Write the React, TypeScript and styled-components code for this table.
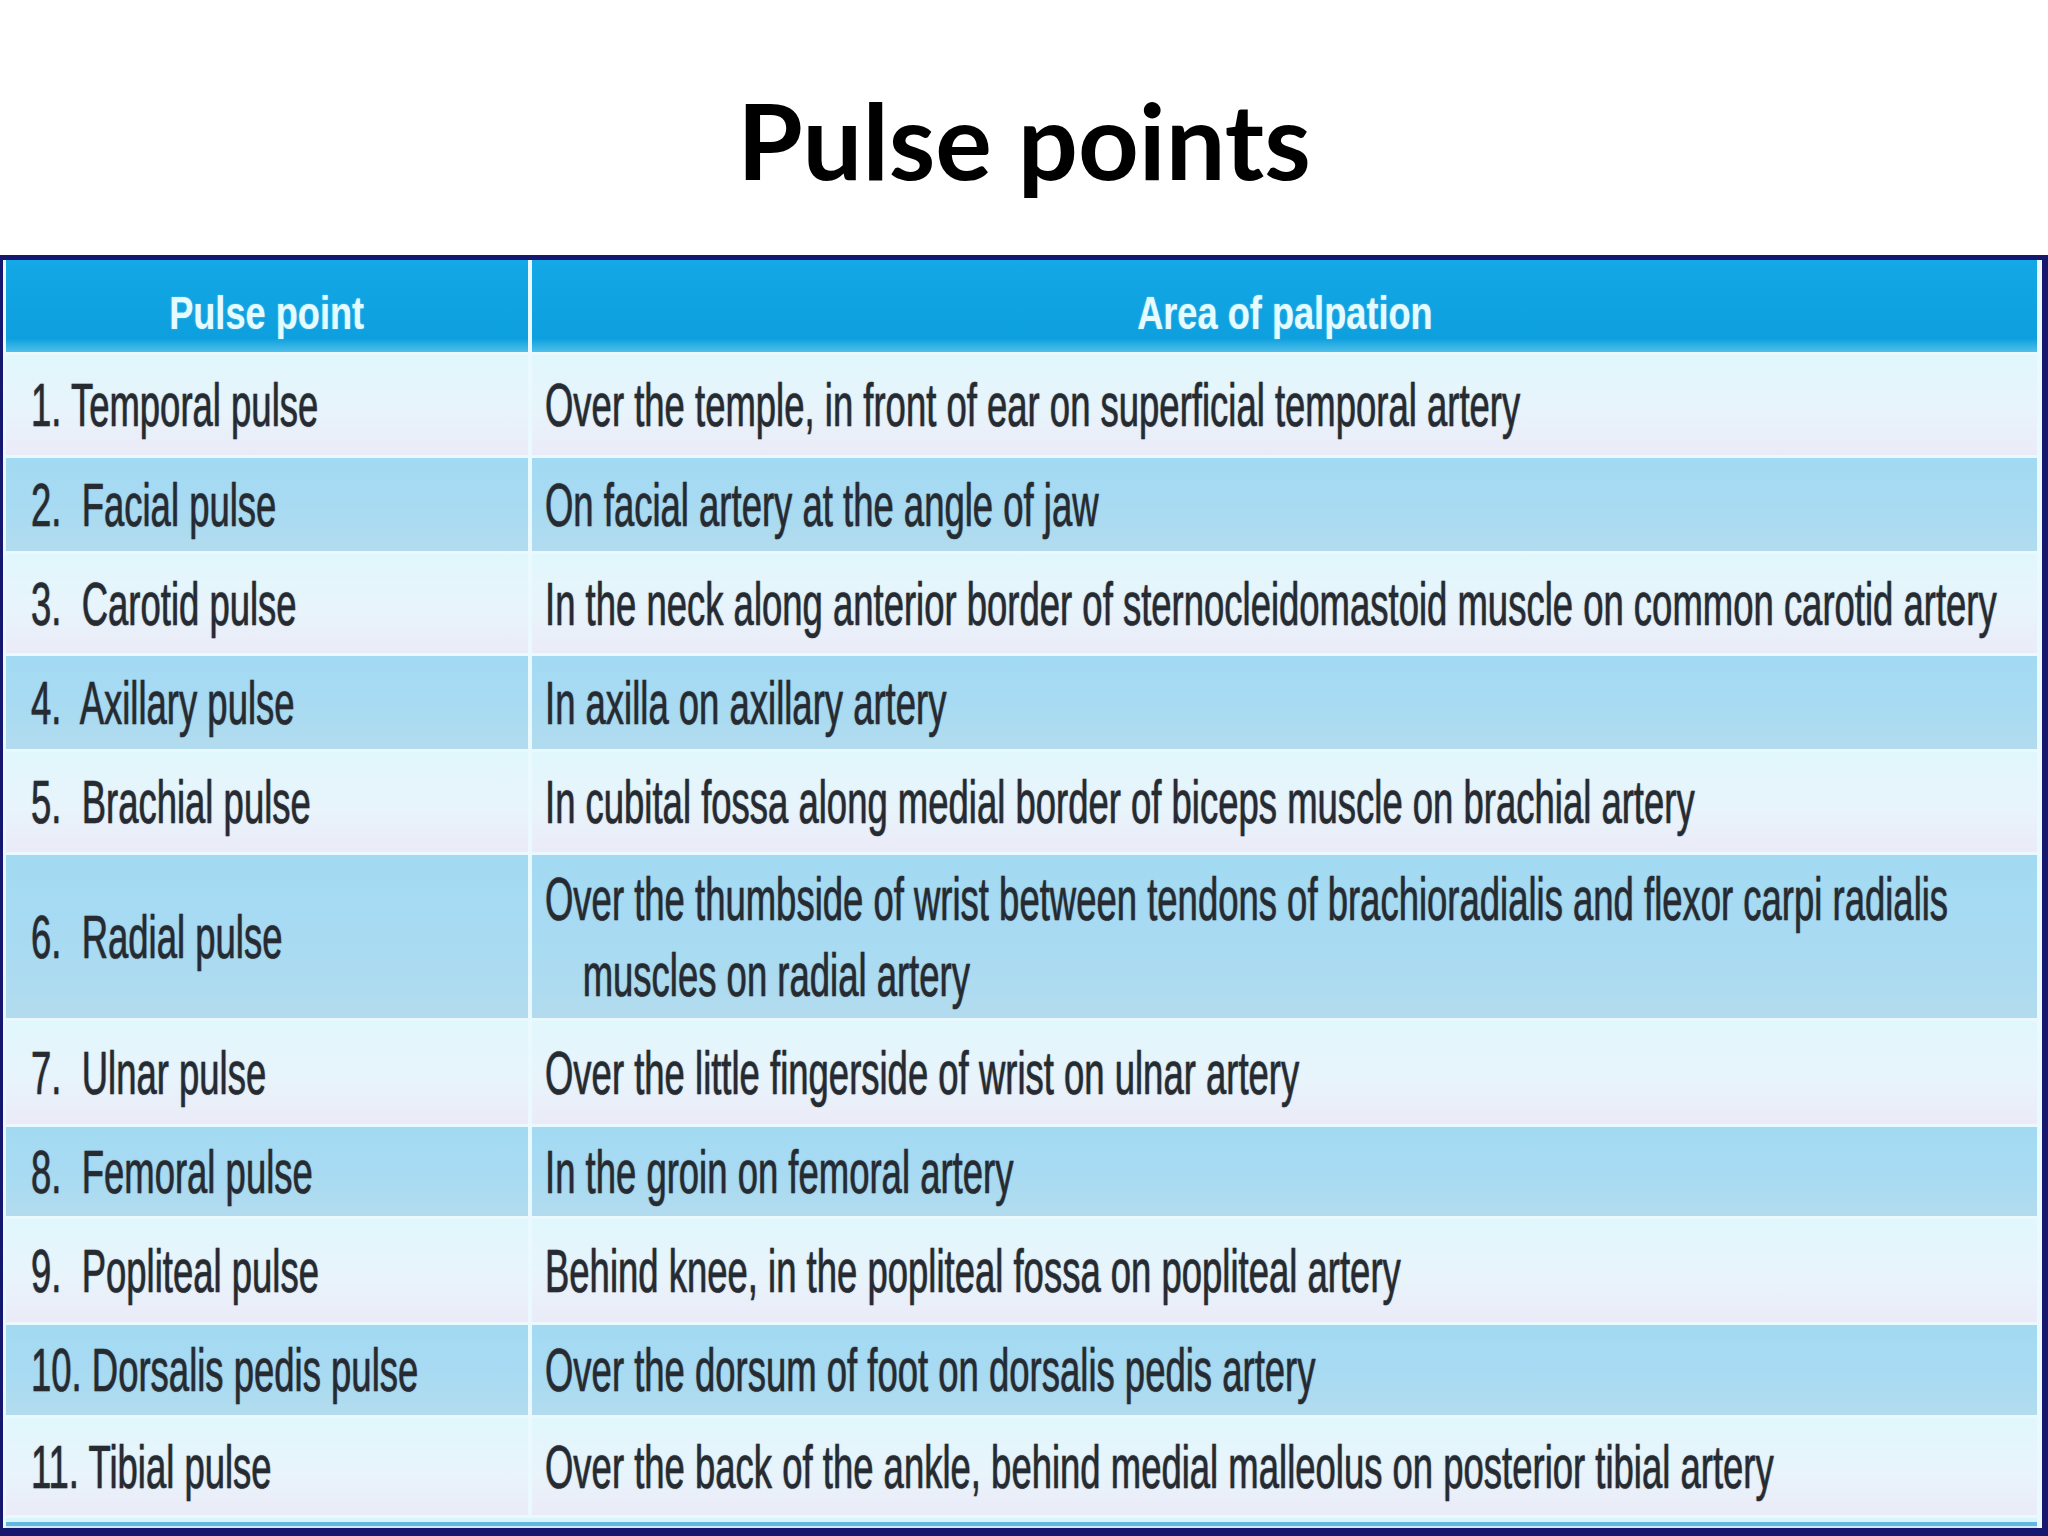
import React from 'react';
import styled, {createGlobalStyle} from 'styled-components';

const rows = [
    {id: 1, point: '1. Temporal pulse', area: ['Over the temple, in front of ear on superficial temporal artery'], h: 100},
    {id: 2, point: '2.  Facial pulse', area: ['On facial artery at the angle of jaw'], h: 93},
    {id: 3, point: '3.  Carotid pulse', area: ['In the neck along anterior border of sternocleidomastoid muscle on common carotid artery'], h: 99},
    {id: 4, point: '4.  Axillary pulse', area: ['In axilla on axillary artery'], h: 93},
    {id: 5, point: '5.  Brachial pulse', area: ['In cubital fossa along medial border of biceps muscle on brachial artery'], h: 100},
    {
        id: 6,
        point: '6.  Radial pulse',
        area: ['Over the thumbside of wrist between tendons of brachioradialis and flexor carpi radialis', 'muscles on radial artery'],
        h: 163
    },
    {id: 7, point: '7.  Ulnar pulse', area: ['Over the little fingerside of wrist on ulnar artery'], h: 103},
    {id: 8, point: '8.  Femoral pulse', area: ['In the groin on femoral artery'], h: 89},
    {id: 9, point: '9.  Popliteal pulse', area: ['Behind knee, in the popliteal fossa on popliteal artery'], h: 103},
    {id: 10, point: '10. Dorsalis pedis pulse', area: ['Over the dorsum of foot on dorsalis pedis artery'], h: 90},
    {id: 11, point: '11. Tibial pulse', area: ['Over the back of the ankle, behind medial malleolus on posterior tibial artery'], h: 97},
]

export default function App() {
    return (
        <>
            <GlobalStyle/>
            <Page>
                <TitleBar>
                    <Title>Pulse points</Title>
                </TitleBar>

                <Table>
                    <Row $h={92}>
                        <HeadCell>
                            <HeadText>Pulse point</HeadText>
                        </HeadCell>
                        <HeadCell>
                            <HeadText>Area of palpation</HeadText>
                        </HeadCell>
                    </Row>

                    {rows.map((r, i) => (
                        <Row key={r.id} $h={r.h}>
                            <Cell $tone={i % 2 ? 'blue' : 'light'} $pad={25}>
                                <Squeeze>{r.point}</Squeeze>
                            </Cell>
                            <Cell $tone={i % 2 ? 'blue' : 'light'} $pad={13}>
                                <Squeeze>
                                    {r.area.map((line, j) => (
                                        <Line key={j} $indent={j > 0}>{line}</Line>
                                    ))}
                                </Squeeze>
                            </Cell>
                        </Row>
                    ))}

                    <BottomStrip/>
                </Table>
            </Page>
        </>
    );
}


const GlobalStyle = createGlobalStyle`
    html, body {
        margin: 0;
        padding: 0;
        background: #ffffff;
        overflow: hidden;
    }
`

const Page = styled.div`
    width: 2048px;
    height: 1536px;
    display: flex;
    flex-direction: column;
    background: #ffffff;
`

const TitleBar = styled.header`
    height: 255px;
    box-sizing: border-box;
    padding-top: 87px;
    display: flex;
    justify-content: center;
`

const Title = styled.h1`
    margin: 0;
    font-family: Lato, "Open Sans", sans-serif;
    font-weight: 700;
    font-size: 106px;
    line-height: 104px;
    color: #000000;
`

const Table = styled.section`
    flex: 1;
    display: flex;
    flex-direction: column;
    gap: 3px;
    padding: 0 5px 0 3px;
    background: #eaf9fe;
    border-style: solid;
    border-color: #15186e;
    border-width: 5px 6px 8px 3px;
`

const Row = styled.div<{ $h: number }>`
    height: ${p => p.$h}px;
    display: grid;
    grid-template-columns: 522px minmax(0, 1fr);
    column-gap: 4px;
`

const HeadCell = styled.div`
    display: flex;
    align-items: center;
    justify-content: center;
    padding-top: 12px;
    box-sizing: border-box;
    overflow: hidden;
    background: linear-gradient(180deg, #14a8e6 0%, #0d9fde 85%, #4fc0ea 100%);
`

const HeadText = styled.span`
    display: inline-block;
    white-space: pre;
    font-family: "Liberation Sans", Arial, sans-serif;
    font-weight: 700;
    font-size: 47px;
    line-height: 1;
    color: #e4fbff;
    text-shadow: 0 0 2px rgba(200, 245, 255, 0.5);
    transform: scaleX(0.77);
    transform-origin: center;
`

const Cell = styled.div<{ $tone: 'light' | 'blue', $pad: number }>`
    display: flex;
    align-items: center;
    padding-left: ${p => p.$pad}px;
    overflow: hidden;
    background: ${p => p.$tone === 'blue'
            ? 'linear-gradient(180deg, #a2daf3 0%, #a9dbf2 60%, #b3dbef 100%)'
            : 'linear-gradient(180deg, #e0f7fc 0%, #e8f4fb 55%, #ebebf8 100%)'};
`

const Squeeze = styled.span`
    display: inline-block;
    white-space: pre;
    font-family: "Liberation Sans", Arial, sans-serif;
    font-size: 61px;
    line-height: 76px;
    color: #262a31;
    -webkit-text-stroke: 0.6px #262a31;
    text-shadow: 0 0 2px rgba(40, 46, 56, 0.4);
    transform: scaleX(0.598);
    transform-origin: left center;
`

const Line = styled.span<{ $indent: boolean }>`
    display: block;
    padding-left: ${p => p.$indent ? 63 : 0}px;
`

const BottomStrip = styled.div`
    flex: 1;
    background: linear-gradient(180deg, #d9f4fb 0%, #d9f4fb 35%, #63b6dc 40%, #63b6dc 75%, #cdeaf6 80%);
`
